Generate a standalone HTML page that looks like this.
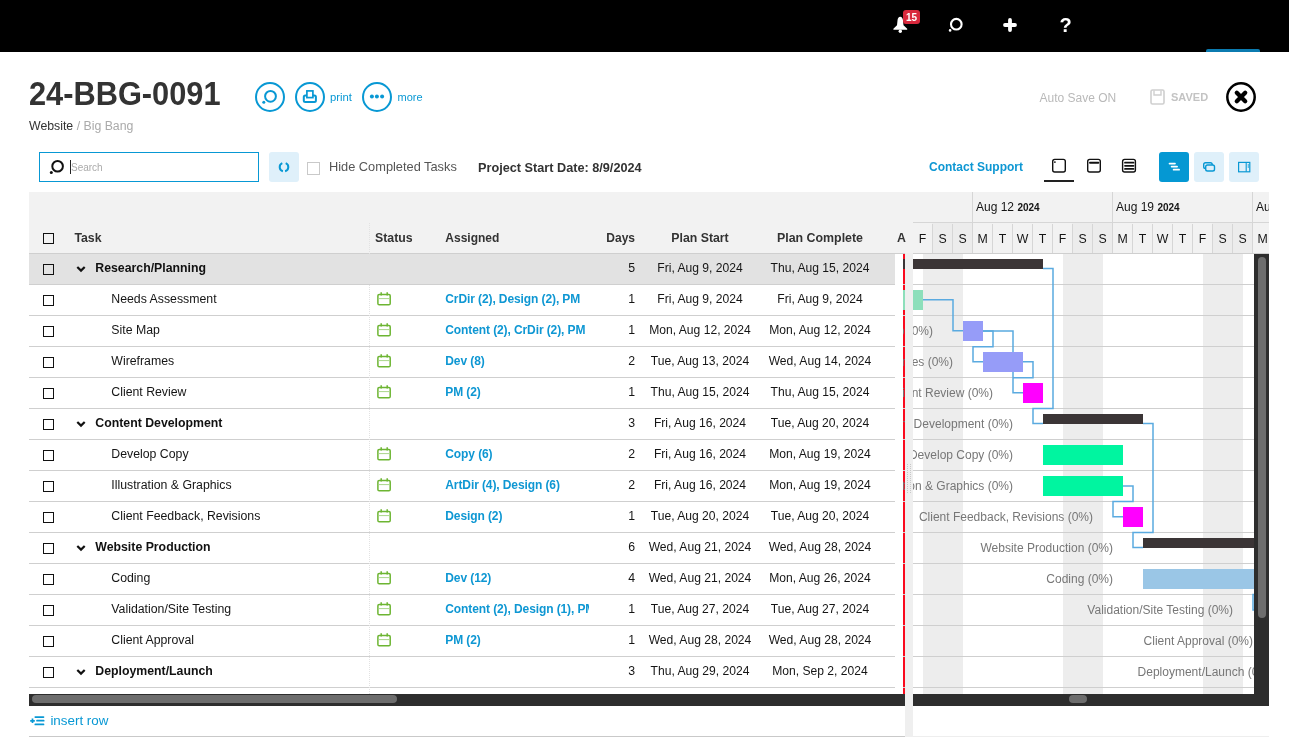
<!DOCTYPE html>
<html><head><meta charset="utf-8"><style>
html,body{margin:0;padding:0;background:#fff;}
body{width:1289px;height:737px;position:relative;overflow:hidden;font-family:"Liberation Sans", sans-serif;}
.wrap{position:absolute;left:0;top:0;width:1289px;height:737px;will-change:transform;}
.t{position:absolute;white-space:nowrap;}
</style></head><body><div class="wrap">
<div style="position:absolute;left:0px;top:0px;width:1289px;height:52px;background:#000"></div>
<div style="position:absolute;left:1206px;top:49px;width:54px;height:3px;background:#0b7bb0;border-radius:2px 2px 0 0"></div>
<svg style="position:absolute;left:892px;top:15px" width="18" height="20" viewBox="0 0 18 20"><path d="M8.2 1.8C6.4 2 5.7 3.4 5.5 5.5L5 10.3L1.4 13.8V14.8H15.2V13.8L11.5 10.3L11 5.5C10.8 3.4 10 2 8.2 1.8Z" fill="#fff"/><circle cx="8.3" cy="16.3" r="1.7" fill="#fff"/></svg>
<div style="position:absolute;left:903px;top:10px;width:17px;height:14px;background:#d8283c;border-radius:3px"></div>
<div class="t" style="left:903px;top:11px;width:17px;height:14px;text-align:center;font-size:10px;line-height:14px;color:#fff;font-weight:bold">15</div>
<svg style="position:absolute;left:946px;top:15px" width="20" height="20" viewBox="0 0 20 20"><circle cx="10.3" cy="9.2" r="5.3" fill="none" stroke="#fff" stroke-width="2.1"/><circle cx="4.1" cy="15.4" r="1.3" fill="#fff"/></svg>
<svg style="position:absolute;left:1002px;top:17px" width="16" height="16" viewBox="0 0 16 16"><path d="M8 3v10M3 8h10" stroke="#fff" stroke-width="3.8" stroke-linecap="round"/></svg>
<div class="t" style="left:1059.5px;top:11px;font-size:20px;line-height:28px;color:#fff;font-weight:bold;">?</div>
<div class="t" style="left:29px;top:69px;font-size:34px;line-height:48px;color:#333;font-weight:bold;transform:scaleX(0.905);transform-origin:0 0;">24-BBG-0091</div>
<div class="t" style="left:29px;top:117px;font-size:12.3px;line-height:18px;color:#333;font-weight:normal;">Website <span style="color:#aaa">/ Big Bang</span></div>
<svg style="position:absolute;left:254px;top:81px" width="32" height="32" viewBox="0 0 32 32"><circle cx="16" cy="16" r="14" fill="none" stroke="#0898d4" stroke-width="2"/></svg>
<svg style="position:absolute;left:294px;top:81px" width="32" height="32" viewBox="0 0 32 32"><circle cx="16" cy="16" r="14" fill="none" stroke="#0898d4" stroke-width="2"/></svg>
<svg style="position:absolute;left:361px;top:81px" width="32" height="32" viewBox="0 0 32 32"><circle cx="16" cy="16" r="14" fill="none" stroke="#0898d4" stroke-width="2"/></svg>
<svg style="position:absolute;left:254px;top:81px" width="32" height="32" viewBox="0 0 32 32"><circle cx="16.5" cy="15.3" r="5.4" fill="none" stroke="#0898d4" stroke-width="2"/><circle cx="9.8" cy="21.3" r="1.5" fill="#0898d4"/></svg>
<svg style="position:absolute;left:294px;top:81px" width="32" height="32" viewBox="0 0 32 32"><rect x="9.8" y="14.4" width="12.1" height="6.6" rx="1.5" fill="#fff" stroke="#0898d4" stroke-width="2"/><rect x="12.9" y="9.9" width="6" height="6.7" fill="#fff" stroke="#0898d4" stroke-width="1.7"/></svg>
<svg style="position:absolute;left:361px;top:81px" width="32" height="32" viewBox="0 0 32 32"><circle cx="10.9" cy="15.5" r="2" fill="#0898d4"/><circle cx="15.9" cy="15.5" r="2" fill="#0898d4"/><circle cx="21.1" cy="15.5" r="2" fill="#0898d4"/></svg>
<div class="t" style="left:330px;top:89px;font-size:11.3px;line-height:16px;color:#0898d4;font-weight:normal;">print</div>
<div class="t" style="left:397.5px;top:89px;font-size:11px;line-height:16px;color:#0898d4;font-weight:normal;">more</div>
<div class="t" style="left:1039.5px;top:90px;font-size:12px;line-height:17px;color:#b9b9b9;font-weight:normal;">Auto Save ON</div>
<svg style="position:absolute;left:1149px;top:88px" width="18" height="18" viewBox="0 0 18 18"><rect x="2" y="2" width="13" height="14" rx="1.5" fill="none" stroke="#cfcfcf" stroke-width="1.6"/><path d="M5 2.5v4.5h7V2.5" fill="none" stroke="#cfcfcf" stroke-width="1.4"/></svg>
<div class="t" style="left:1171px;top:89px;font-size:11px;line-height:16px;color:#c3c3c3;font-weight:bold;">SAVED</div>
<svg style="position:absolute;left:1225px;top:81px" width="32" height="32" viewBox="0 0 32 32"><circle cx="16" cy="16" r="13.7" fill="none" stroke="#000" stroke-width="2.5"/><path d="M11.8 11.8l8.4 8.4M20.2 11.8l-8.4 8.4" stroke="#000" stroke-width="4.3" stroke-linecap="round"/></svg>
<div style="position:absolute;left:39px;top:152px;width:218px;height:28px;border:1px solid #0898d4;background:#fff"></div>
<svg style="position:absolute;left:48px;top:158px" width="18" height="18" viewBox="0 0 18 18"><circle cx="9.6" cy="8.3" r="5.3" fill="none" stroke="#111" stroke-width="2"/><circle cx="3.3" cy="14.6" r="1.5" fill="#111"/></svg>
<div style="position:absolute;left:70px;top:160px;width:1px;height:14px;background:#222"></div>
<div class="t" style="left:71px;top:161px;font-size:10px;line-height:14px;color:#aaa;font-weight:normal;">Search</div>
<div style="position:absolute;left:269px;top:152px;width:30px;height:30px;background:#dff0fa;border-radius:3px"></div>
<svg style="position:absolute;left:276px;top:159px" width="16" height="16" viewBox="0 0 16 16"><path d="M6.3 4.05A4.3 4.3 0 0 0 6.9 12.16M9.7 4.05A4.3 4.3 0 0 1 9.1 12.16" fill="none" stroke="#0898d4" stroke-width="2"/></svg>
<div style="position:absolute;left:307px;top:162px;width:11px;height:11px;border:1px solid #c9c9c9;background:#fff"></div>
<div class="t" style="left:329px;top:158px;font-size:12.8px;line-height:18px;color:#555;font-weight:normal;">Hide Completed Tasks</div>
<div class="t" style="left:478px;top:159px;font-size:12.7px;line-height:18px;color:#333;font-weight:bold;">Project Start Date: 8/9/2024</div>
<div class="t" style="left:929px;top:159px;font-size:12px;line-height:17px;color:#0e97d3;font-weight:bold;">Contact Support</div>
<svg style="position:absolute;left:1050px;top:157px" width="18" height="18" viewBox="0 0 18 18"><rect x="2.7" y="2.4" width="12.6" height="12.6" rx="2" fill="none" stroke="#111" stroke-width="1.4"/><circle cx="4.9" cy="5.1" r="0.9" fill="#111"/></svg>
<div style="position:absolute;left:1044px;top:180px;width:30px;height:2px;background:#222"></div>
<svg style="position:absolute;left:1085px;top:157px" width="18" height="18" viewBox="0 0 18 18"><rect x="2.7" y="2.4" width="12.6" height="12.6" rx="2" fill="none" stroke="#111" stroke-width="1.4"/><path d="M5 5.7h8.3" stroke="#111" stroke-width="2" stroke-linecap="round"/></svg>
<svg style="position:absolute;left:1120px;top:157px" width="18" height="18" viewBox="0 0 18 18"><rect x="2.6" y="2.4" width="12.8" height="12.6" rx="2" fill="none" stroke="#111" stroke-width="1.4"/><path d="M5 5.7h8.5M5 8.8h8.5M5 11.9h8.5" stroke="#111" stroke-width="1.8" stroke-linecap="round"/></svg>
<div style="position:absolute;left:1159px;top:152px;width:30px;height:30px;background:#0598d3;border-radius:3px"></div>
<svg style="position:absolute;left:1159px;top:152px" width="30" height="30" viewBox="0 0 30 30"><path d="M10.5 11.6h5.5M12.6 14.6h5.5M14.6 17.7h5.5" stroke="#fff" stroke-width="1.7" stroke-linecap="round"/></svg>
<div style="position:absolute;left:1194px;top:152px;width:30px;height:30px;background:#dff0fa;border-radius:3px"></div>
<svg style="position:absolute;left:1194px;top:152px" width="30" height="30" viewBox="0 0 30 30"><rect x="9.7" y="10.7" width="8.5" height="5.8" rx="1.8" fill="none" stroke="#0898d4" stroke-width="1.4"/><rect x="11.7" y="13" width="8.8" height="6" rx="1.8" fill="#dff0fa" stroke="#0898d4" stroke-width="1.4"/></svg>
<div style="position:absolute;left:1229px;top:152px;width:30px;height:30px;background:#dff0fa;border-radius:3px"></div>
<svg style="position:absolute;left:1229px;top:152px" width="30" height="30" viewBox="0 0 30 30"><rect x="9.6" y="10.4" width="11.2" height="9.4" fill="none" stroke="#0898d4" stroke-width="1.2"/><path d="M17.2 10.4v9.4" stroke="#0898d4" stroke-width="1.1"/><circle cx="19.3" cy="13" r=".7" fill="#0898d4"/><circle cx="19.3" cy="15" r=".7" fill="#0898d4"/></svg>
<div style="position:absolute;left:29px;top:192px;width:1240px;height:61px;background:#f2f2f2"></div>
<div style="position:absolute;left:29px;top:253px;width:876px;height:1px;background:#cfcfcf"></div>
<div style="position:absolute;left:43px;top:233px;width:9px;height:9px;border:1.3px solid #111;background:transparent"></div>
<div class="t" style="left:74.4px;top:229px;font-size:12.3px;line-height:18px;color:#333;font-weight:bold;">Task</div>
<div class="t" style="left:375px;top:229px;font-size:12.3px;line-height:18px;color:#333;font-weight:bold;">Status</div>
<div class="t" style="left:445.3px;top:230px;font-size:12.0px;line-height:17px;color:#333;font-weight:bold;">Assigned</div>
<div class="t" style="right:654px;top:230px;font-size:12.0px;line-height:17px;color:#333;font-weight:bold;">Days</div>
<div class="t" style="left:400px;width:600px;text-align:center;top:229px;font-size:12.3px;line-height:18px;color:#333;font-weight:bold;">Plan Start</div>
<div class="t" style="left:520px;width:600px;text-align:center;top:229px;font-size:12.4px;line-height:18px;color:#333;font-weight:bold;">Plan Complete</div>
<div class="t" style="left:897px;top:229px;font-size:12.3px;line-height:18px;color:#333;font-weight:bold;">A</div>
<div style="position:absolute;left:29px;top:254px;width:866px;height:30px;background:#e2e2e2"></div>
<div style="position:absolute;left:29px;top:284px;width:866px;height:1px;background:#cfcfcf"></div>
<div style="position:absolute;left:43px;top:264px;width:9px;height:9px;border:1.3px solid #111;background:transparent"></div>
<svg style="position:absolute;left:75px;top:264px" width="12" height="10" viewBox="0 0 12 10"><path d="M2.3 3l3.7 3.6L9.7 3" fill="none" stroke="#111" stroke-width="2.2"/></svg>
<div class="t" style="left:95.3px;top:259px;font-size:12.3px;line-height:18px;color:#111;font-weight:bold;">Research/Planning</div>
<div class="t" style="right:654px;top:259px;font-size:12.3px;line-height:18px;color:#151515;font-weight:normal;">5</div>
<div class="t" style="left:400px;width:600px;text-align:center;top:260px;font-size:12.1px;line-height:17px;color:#151515;font-weight:normal;">Fri, Aug 9, 2024</div>
<div class="t" style="left:520px;width:600px;text-align:center;top:260px;font-size:12.1px;line-height:17px;color:#151515;font-weight:normal;">Thu, Aug 15, 2024</div>
<div style="position:absolute;left:29px;top:315px;width:866px;height:1px;background:#cfcfcf"></div>
<div style="position:absolute;left:43px;top:295px;width:9px;height:9px;border:1.3px solid #111;background:transparent"></div>
<div class="t" style="left:111.3px;top:290px;font-size:12.3px;line-height:18px;color:#151515;font-weight:normal;">Needs Assessment</div>
<svg style="position:absolute;left:376px;top:291px" width="16" height="16" viewBox="0 0 16 16"><rect x="1.9" y="3.5" width="12.3" height="10.3" rx="1.3" fill="none" stroke="#6db532" stroke-width="1.5"/><path d="M5.2 1.2v3.3M11.2 1.2v3.3" stroke="#6db532" stroke-width="1.5"/><path d="M2.5 7.6h11" stroke="#a9d68a" stroke-width="1"/></svg>
<div class="t" style="left:445.3px;top:291px;width:144px;overflow:hidden;font-size:12px;letter-spacing:-0.1px;line-height:17px;color:#0e97d3;font-weight:bold">CrDir (2), Design (2), PM</div>
<div class="t" style="right:654px;top:290px;font-size:12.3px;line-height:18px;color:#151515;font-weight:normal;">1</div>
<div class="t" style="left:400px;width:600px;text-align:center;top:291px;font-size:12.1px;line-height:17px;color:#151515;font-weight:normal;">Fri, Aug 9, 2024</div>
<div class="t" style="left:520px;width:600px;text-align:center;top:291px;font-size:12.1px;line-height:17px;color:#151515;font-weight:normal;">Fri, Aug 9, 2024</div>
<div style="position:absolute;left:29px;top:346px;width:866px;height:1px;background:#cfcfcf"></div>
<div style="position:absolute;left:43px;top:326px;width:9px;height:9px;border:1.3px solid #111;background:transparent"></div>
<div class="t" style="left:111.3px;top:321px;font-size:12.3px;line-height:18px;color:#151515;font-weight:normal;">Site Map</div>
<svg style="position:absolute;left:376px;top:322px" width="16" height="16" viewBox="0 0 16 16"><rect x="1.9" y="3.5" width="12.3" height="10.3" rx="1.3" fill="none" stroke="#6db532" stroke-width="1.5"/><path d="M5.2 1.2v3.3M11.2 1.2v3.3" stroke="#6db532" stroke-width="1.5"/><path d="M2.5 7.6h11" stroke="#a9d68a" stroke-width="1"/></svg>
<div class="t" style="left:445.3px;top:322px;width:144px;overflow:hidden;font-size:12px;letter-spacing:-0.1px;line-height:17px;color:#0e97d3;font-weight:bold">Content (2), CrDir (2), PM</div>
<div class="t" style="right:654px;top:321px;font-size:12.3px;line-height:18px;color:#151515;font-weight:normal;">1</div>
<div class="t" style="left:400px;width:600px;text-align:center;top:322px;font-size:12.1px;line-height:17px;color:#151515;font-weight:normal;">Mon, Aug 12, 2024</div>
<div class="t" style="left:520px;width:600px;text-align:center;top:322px;font-size:12.1px;line-height:17px;color:#151515;font-weight:normal;">Mon, Aug 12, 2024</div>
<div style="position:absolute;left:29px;top:377px;width:866px;height:1px;background:#cfcfcf"></div>
<div style="position:absolute;left:43px;top:357px;width:9px;height:9px;border:1.3px solid #111;background:transparent"></div>
<div class="t" style="left:111.3px;top:352px;font-size:12.3px;line-height:18px;color:#151515;font-weight:normal;">Wireframes</div>
<svg style="position:absolute;left:376px;top:353px" width="16" height="16" viewBox="0 0 16 16"><rect x="1.9" y="3.5" width="12.3" height="10.3" rx="1.3" fill="none" stroke="#6db532" stroke-width="1.5"/><path d="M5.2 1.2v3.3M11.2 1.2v3.3" stroke="#6db532" stroke-width="1.5"/><path d="M2.5 7.6h11" stroke="#a9d68a" stroke-width="1"/></svg>
<div class="t" style="left:445.3px;top:353px;width:144px;overflow:hidden;font-size:12px;letter-spacing:-0.1px;line-height:17px;color:#0e97d3;font-weight:bold">Dev (8)</div>
<div class="t" style="right:654px;top:352px;font-size:12.3px;line-height:18px;color:#151515;font-weight:normal;">2</div>
<div class="t" style="left:400px;width:600px;text-align:center;top:353px;font-size:12.1px;line-height:17px;color:#151515;font-weight:normal;">Tue, Aug 13, 2024</div>
<div class="t" style="left:520px;width:600px;text-align:center;top:353px;font-size:12.1px;line-height:17px;color:#151515;font-weight:normal;">Wed, Aug 14, 2024</div>
<div style="position:absolute;left:29px;top:408px;width:866px;height:1px;background:#cfcfcf"></div>
<div style="position:absolute;left:43px;top:388px;width:9px;height:9px;border:1.3px solid #111;background:transparent"></div>
<div class="t" style="left:111.3px;top:383px;font-size:12.3px;line-height:18px;color:#151515;font-weight:normal;">Client Review</div>
<svg style="position:absolute;left:376px;top:384px" width="16" height="16" viewBox="0 0 16 16"><rect x="1.9" y="3.5" width="12.3" height="10.3" rx="1.3" fill="none" stroke="#6db532" stroke-width="1.5"/><path d="M5.2 1.2v3.3M11.2 1.2v3.3" stroke="#6db532" stroke-width="1.5"/><path d="M2.5 7.6h11" stroke="#a9d68a" stroke-width="1"/></svg>
<div class="t" style="left:445.3px;top:384px;width:144px;overflow:hidden;font-size:12px;letter-spacing:-0.1px;line-height:17px;color:#0e97d3;font-weight:bold">PM (2)</div>
<div class="t" style="right:654px;top:383px;font-size:12.3px;line-height:18px;color:#151515;font-weight:normal;">1</div>
<div class="t" style="left:400px;width:600px;text-align:center;top:384px;font-size:12.1px;line-height:17px;color:#151515;font-weight:normal;">Thu, Aug 15, 2024</div>
<div class="t" style="left:520px;width:600px;text-align:center;top:384px;font-size:12.1px;line-height:17px;color:#151515;font-weight:normal;">Thu, Aug 15, 2024</div>
<div style="position:absolute;left:29px;top:439px;width:866px;height:1px;background:#cfcfcf"></div>
<div style="position:absolute;left:43px;top:419px;width:9px;height:9px;border:1.3px solid #111;background:transparent"></div>
<svg style="position:absolute;left:75px;top:419px" width="12" height="10" viewBox="0 0 12 10"><path d="M2.3 3l3.7 3.6L9.7 3" fill="none" stroke="#111" stroke-width="2.2"/></svg>
<div class="t" style="left:95.3px;top:414px;font-size:12.3px;line-height:18px;color:#111;font-weight:bold;">Content Development</div>
<div class="t" style="right:654px;top:414px;font-size:12.3px;line-height:18px;color:#151515;font-weight:normal;">3</div>
<div class="t" style="left:400px;width:600px;text-align:center;top:415px;font-size:12.1px;line-height:17px;color:#151515;font-weight:normal;">Fri, Aug 16, 2024</div>
<div class="t" style="left:520px;width:600px;text-align:center;top:415px;font-size:12.1px;line-height:17px;color:#151515;font-weight:normal;">Tue, Aug 20, 2024</div>
<div style="position:absolute;left:29px;top:470px;width:866px;height:1px;background:#cfcfcf"></div>
<div style="position:absolute;left:43px;top:450px;width:9px;height:9px;border:1.3px solid #111;background:transparent"></div>
<div class="t" style="left:111.3px;top:445px;font-size:12.3px;line-height:18px;color:#151515;font-weight:normal;">Develop Copy</div>
<svg style="position:absolute;left:376px;top:446px" width="16" height="16" viewBox="0 0 16 16"><rect x="1.9" y="3.5" width="12.3" height="10.3" rx="1.3" fill="none" stroke="#6db532" stroke-width="1.5"/><path d="M5.2 1.2v3.3M11.2 1.2v3.3" stroke="#6db532" stroke-width="1.5"/><path d="M2.5 7.6h11" stroke="#a9d68a" stroke-width="1"/></svg>
<div class="t" style="left:445.3px;top:446px;width:144px;overflow:hidden;font-size:12px;letter-spacing:-0.1px;line-height:17px;color:#0e97d3;font-weight:bold">Copy (6)</div>
<div class="t" style="right:654px;top:445px;font-size:12.3px;line-height:18px;color:#151515;font-weight:normal;">2</div>
<div class="t" style="left:400px;width:600px;text-align:center;top:446px;font-size:12.1px;line-height:17px;color:#151515;font-weight:normal;">Fri, Aug 16, 2024</div>
<div class="t" style="left:520px;width:600px;text-align:center;top:446px;font-size:12.1px;line-height:17px;color:#151515;font-weight:normal;">Mon, Aug 19, 2024</div>
<div style="position:absolute;left:29px;top:501px;width:866px;height:1px;background:#cfcfcf"></div>
<div style="position:absolute;left:43px;top:481px;width:9px;height:9px;border:1.3px solid #111;background:transparent"></div>
<div class="t" style="left:111.3px;top:476px;font-size:12.3px;line-height:18px;color:#151515;font-weight:normal;">Illustration &amp; Graphics</div>
<svg style="position:absolute;left:376px;top:477px" width="16" height="16" viewBox="0 0 16 16"><rect x="1.9" y="3.5" width="12.3" height="10.3" rx="1.3" fill="none" stroke="#6db532" stroke-width="1.5"/><path d="M5.2 1.2v3.3M11.2 1.2v3.3" stroke="#6db532" stroke-width="1.5"/><path d="M2.5 7.6h11" stroke="#a9d68a" stroke-width="1"/></svg>
<div class="t" style="left:445.3px;top:477px;width:144px;overflow:hidden;font-size:12px;letter-spacing:-0.1px;line-height:17px;color:#0e97d3;font-weight:bold">ArtDir (4), Design (6)</div>
<div class="t" style="right:654px;top:476px;font-size:12.3px;line-height:18px;color:#151515;font-weight:normal;">2</div>
<div class="t" style="left:400px;width:600px;text-align:center;top:477px;font-size:12.1px;line-height:17px;color:#151515;font-weight:normal;">Fri, Aug 16, 2024</div>
<div class="t" style="left:520px;width:600px;text-align:center;top:477px;font-size:12.1px;line-height:17px;color:#151515;font-weight:normal;">Mon, Aug 19, 2024</div>
<div style="position:absolute;left:29px;top:532px;width:866px;height:1px;background:#cfcfcf"></div>
<div style="position:absolute;left:43px;top:512px;width:9px;height:9px;border:1.3px solid #111;background:transparent"></div>
<div class="t" style="left:111.3px;top:507px;font-size:12.3px;line-height:18px;color:#151515;font-weight:normal;">Client Feedback, Revisions</div>
<svg style="position:absolute;left:376px;top:508px" width="16" height="16" viewBox="0 0 16 16"><rect x="1.9" y="3.5" width="12.3" height="10.3" rx="1.3" fill="none" stroke="#6db532" stroke-width="1.5"/><path d="M5.2 1.2v3.3M11.2 1.2v3.3" stroke="#6db532" stroke-width="1.5"/><path d="M2.5 7.6h11" stroke="#a9d68a" stroke-width="1"/></svg>
<div class="t" style="left:445.3px;top:508px;width:144px;overflow:hidden;font-size:12px;letter-spacing:-0.1px;line-height:17px;color:#0e97d3;font-weight:bold">Design (2)</div>
<div class="t" style="right:654px;top:507px;font-size:12.3px;line-height:18px;color:#151515;font-weight:normal;">1</div>
<div class="t" style="left:400px;width:600px;text-align:center;top:508px;font-size:12.1px;line-height:17px;color:#151515;font-weight:normal;">Tue, Aug 20, 2024</div>
<div class="t" style="left:520px;width:600px;text-align:center;top:508px;font-size:12.1px;line-height:17px;color:#151515;font-weight:normal;">Tue, Aug 20, 2024</div>
<div style="position:absolute;left:29px;top:563px;width:866px;height:1px;background:#cfcfcf"></div>
<div style="position:absolute;left:43px;top:543px;width:9px;height:9px;border:1.3px solid #111;background:transparent"></div>
<svg style="position:absolute;left:75px;top:543px" width="12" height="10" viewBox="0 0 12 10"><path d="M2.3 3l3.7 3.6L9.7 3" fill="none" stroke="#111" stroke-width="2.2"/></svg>
<div class="t" style="left:95.3px;top:538px;font-size:12.3px;line-height:18px;color:#111;font-weight:bold;">Website Production</div>
<div class="t" style="right:654px;top:538px;font-size:12.3px;line-height:18px;color:#151515;font-weight:normal;">6</div>
<div class="t" style="left:400px;width:600px;text-align:center;top:539px;font-size:12.1px;line-height:17px;color:#151515;font-weight:normal;">Wed, Aug 21, 2024</div>
<div class="t" style="left:520px;width:600px;text-align:center;top:539px;font-size:12.1px;line-height:17px;color:#151515;font-weight:normal;">Wed, Aug 28, 2024</div>
<div style="position:absolute;left:29px;top:594px;width:866px;height:1px;background:#cfcfcf"></div>
<div style="position:absolute;left:43px;top:574px;width:9px;height:9px;border:1.3px solid #111;background:transparent"></div>
<div class="t" style="left:111.3px;top:569px;font-size:12.3px;line-height:18px;color:#151515;font-weight:normal;">Coding</div>
<svg style="position:absolute;left:376px;top:570px" width="16" height="16" viewBox="0 0 16 16"><rect x="1.9" y="3.5" width="12.3" height="10.3" rx="1.3" fill="none" stroke="#6db532" stroke-width="1.5"/><path d="M5.2 1.2v3.3M11.2 1.2v3.3" stroke="#6db532" stroke-width="1.5"/><path d="M2.5 7.6h11" stroke="#a9d68a" stroke-width="1"/></svg>
<div class="t" style="left:445.3px;top:570px;width:144px;overflow:hidden;font-size:12px;letter-spacing:-0.1px;line-height:17px;color:#0e97d3;font-weight:bold">Dev (12)</div>
<div class="t" style="right:654px;top:569px;font-size:12.3px;line-height:18px;color:#151515;font-weight:normal;">4</div>
<div class="t" style="left:400px;width:600px;text-align:center;top:570px;font-size:12.1px;line-height:17px;color:#151515;font-weight:normal;">Wed, Aug 21, 2024</div>
<div class="t" style="left:520px;width:600px;text-align:center;top:570px;font-size:12.1px;line-height:17px;color:#151515;font-weight:normal;">Mon, Aug 26, 2024</div>
<div style="position:absolute;left:29px;top:625px;width:866px;height:1px;background:#cfcfcf"></div>
<div style="position:absolute;left:43px;top:605px;width:9px;height:9px;border:1.3px solid #111;background:transparent"></div>
<div class="t" style="left:111.3px;top:600px;font-size:12.3px;line-height:18px;color:#151515;font-weight:normal;">Validation/Site Testing</div>
<svg style="position:absolute;left:376px;top:601px" width="16" height="16" viewBox="0 0 16 16"><rect x="1.9" y="3.5" width="12.3" height="10.3" rx="1.3" fill="none" stroke="#6db532" stroke-width="1.5"/><path d="M5.2 1.2v3.3M11.2 1.2v3.3" stroke="#6db532" stroke-width="1.5"/><path d="M2.5 7.6h11" stroke="#a9d68a" stroke-width="1"/></svg>
<div class="t" style="left:445.3px;top:601px;width:144px;overflow:hidden;font-size:12px;letter-spacing:-0.1px;line-height:17px;color:#0e97d3;font-weight:bold">Content (2), Design (1), PM (2)</div>
<div class="t" style="right:654px;top:600px;font-size:12.3px;line-height:18px;color:#151515;font-weight:normal;">1</div>
<div class="t" style="left:400px;width:600px;text-align:center;top:601px;font-size:12.1px;line-height:17px;color:#151515;font-weight:normal;">Tue, Aug 27, 2024</div>
<div class="t" style="left:520px;width:600px;text-align:center;top:601px;font-size:12.1px;line-height:17px;color:#151515;font-weight:normal;">Tue, Aug 27, 2024</div>
<div style="position:absolute;left:29px;top:656px;width:866px;height:1px;background:#cfcfcf"></div>
<div style="position:absolute;left:43px;top:636px;width:9px;height:9px;border:1.3px solid #111;background:transparent"></div>
<div class="t" style="left:111.3px;top:631px;font-size:12.3px;line-height:18px;color:#151515;font-weight:normal;">Client Approval</div>
<svg style="position:absolute;left:376px;top:632px" width="16" height="16" viewBox="0 0 16 16"><rect x="1.9" y="3.5" width="12.3" height="10.3" rx="1.3" fill="none" stroke="#6db532" stroke-width="1.5"/><path d="M5.2 1.2v3.3M11.2 1.2v3.3" stroke="#6db532" stroke-width="1.5"/><path d="M2.5 7.6h11" stroke="#a9d68a" stroke-width="1"/></svg>
<div class="t" style="left:445.3px;top:632px;width:144px;overflow:hidden;font-size:12px;letter-spacing:-0.1px;line-height:17px;color:#0e97d3;font-weight:bold">PM (2)</div>
<div class="t" style="right:654px;top:631px;font-size:12.3px;line-height:18px;color:#151515;font-weight:normal;">1</div>
<div class="t" style="left:400px;width:600px;text-align:center;top:632px;font-size:12.1px;line-height:17px;color:#151515;font-weight:normal;">Wed, Aug 28, 2024</div>
<div class="t" style="left:520px;width:600px;text-align:center;top:632px;font-size:12.1px;line-height:17px;color:#151515;font-weight:normal;">Wed, Aug 28, 2024</div>
<div style="position:absolute;left:29px;top:687px;width:866px;height:1px;background:#cfcfcf"></div>
<div style="position:absolute;left:43px;top:667px;width:9px;height:9px;border:1.3px solid #111;background:transparent"></div>
<svg style="position:absolute;left:75px;top:667px" width="12" height="10" viewBox="0 0 12 10"><path d="M2.3 3l3.7 3.6L9.7 3" fill="none" stroke="#111" stroke-width="2.2"/></svg>
<div class="t" style="left:95.3px;top:662px;font-size:12.3px;line-height:18px;color:#111;font-weight:bold;">Deployment/Launch</div>
<div class="t" style="right:654px;top:662px;font-size:12.3px;line-height:18px;color:#151515;font-weight:normal;">3</div>
<div class="t" style="left:400px;width:600px;text-align:center;top:663px;font-size:12.1px;line-height:17px;color:#151515;font-weight:normal;">Thu, Aug 29, 2024</div>
<div class="t" style="left:520px;width:600px;text-align:center;top:663px;font-size:12.1px;line-height:17px;color:#151515;font-weight:normal;">Mon, Sep 2, 2024</div>
<div style="position:absolute;left:369px;top:223px;width:0;height:471px;border-left:1px dotted #e2e2e2"></div>
<div style="position:absolute;left:932px;top:223px;width:40px;height:30px;background:#ececec"></div>
<div style="position:absolute;left:1072px;top:223px;width:40px;height:30px;background:#ececec"></div>
<div style="position:absolute;left:1212px;top:223px;width:40px;height:30px;background:#ececec"></div>
<div style="position:absolute;left:972px;top:192px;width:1px;height:61px;background:#d6d6d6"></div>
<div style="position:absolute;left:1112px;top:192px;width:1px;height:61px;background:#d6d6d6"></div>
<div style="position:absolute;left:1252px;top:192px;width:1px;height:61px;background:#d6d6d6"></div>
<div style="position:absolute;left:932px;top:224px;width:1px;height:29px;background:#d6d6d6"></div>
<div style="position:absolute;left:952px;top:224px;width:1px;height:29px;background:#d6d6d6"></div>
<div style="position:absolute;left:992px;top:224px;width:1px;height:29px;background:#d6d6d6"></div>
<div style="position:absolute;left:1012px;top:224px;width:1px;height:29px;background:#d6d6d6"></div>
<div style="position:absolute;left:1032px;top:224px;width:1px;height:29px;background:#d6d6d6"></div>
<div style="position:absolute;left:1052px;top:224px;width:1px;height:29px;background:#d6d6d6"></div>
<div style="position:absolute;left:1072px;top:224px;width:1px;height:29px;background:#d6d6d6"></div>
<div style="position:absolute;left:1092px;top:224px;width:1px;height:29px;background:#d6d6d6"></div>
<div style="position:absolute;left:1132px;top:224px;width:1px;height:29px;background:#d6d6d6"></div>
<div style="position:absolute;left:1152px;top:224px;width:1px;height:29px;background:#d6d6d6"></div>
<div style="position:absolute;left:1172px;top:224px;width:1px;height:29px;background:#d6d6d6"></div>
<div style="position:absolute;left:1192px;top:224px;width:1px;height:29px;background:#d6d6d6"></div>
<div style="position:absolute;left:1212px;top:224px;width:1px;height:29px;background:#d6d6d6"></div>
<div style="position:absolute;left:1232px;top:224px;width:1px;height:29px;background:#d6d6d6"></div>
<div style="position:absolute;left:913px;top:222px;width:356px;height:1px;background:#d6d6d6"></div>
<div style="position:absolute;left:913px;top:253px;width:356px;height:1px;background:#cfcfcf"></div>
<div class="t" style="left:976px;top:199px;font-size:12px;line-height:17px;color:#151515;font-weight:normal;">Aug 12 <b style="font-size:10px">2024</b></div>
<div class="t" style="left:1116px;top:199px;font-size:12px;line-height:17px;color:#151515;font-weight:normal;">Aug 19 <b style="font-size:10px">2024</b></div>
<div style="position:absolute;left:1253px;top:192px;width:16px;height:30px;overflow:hidden"><div class="t" style="left:3px;top:7px;font-size:12px;line-height:17px;color:#151515">Aug 26</div></div>
<div class="t" style="left:622.5px;width:600px;text-align:center;top:230px;font-size:12.3px;line-height:18px;color:#151515;font-weight:normal;">F</div>
<div class="t" style="left:642.5px;width:600px;text-align:center;top:230px;font-size:12.3px;line-height:18px;color:#151515;font-weight:normal;">S</div>
<div class="t" style="left:662.5px;width:600px;text-align:center;top:230px;font-size:12.3px;line-height:18px;color:#151515;font-weight:normal;">S</div>
<div class="t" style="left:682.5px;width:600px;text-align:center;top:230px;font-size:12.3px;line-height:18px;color:#151515;font-weight:normal;">M</div>
<div class="t" style="left:702.5px;width:600px;text-align:center;top:230px;font-size:12.3px;line-height:18px;color:#151515;font-weight:normal;">T</div>
<div class="t" style="left:722.5px;width:600px;text-align:center;top:230px;font-size:12.3px;line-height:18px;color:#151515;font-weight:normal;">W</div>
<div class="t" style="left:742.5px;width:600px;text-align:center;top:230px;font-size:12.3px;line-height:18px;color:#151515;font-weight:normal;">T</div>
<div class="t" style="left:762.5px;width:600px;text-align:center;top:230px;font-size:12.3px;line-height:18px;color:#151515;font-weight:normal;">F</div>
<div class="t" style="left:782.5px;width:600px;text-align:center;top:230px;font-size:12.3px;line-height:18px;color:#151515;font-weight:normal;">S</div>
<div class="t" style="left:802.5px;width:600px;text-align:center;top:230px;font-size:12.3px;line-height:18px;color:#151515;font-weight:normal;">S</div>
<div class="t" style="left:822.5px;width:600px;text-align:center;top:230px;font-size:12.3px;line-height:18px;color:#151515;font-weight:normal;">M</div>
<div class="t" style="left:842.5px;width:600px;text-align:center;top:230px;font-size:12.3px;line-height:18px;color:#151515;font-weight:normal;">T</div>
<div class="t" style="left:862.5px;width:600px;text-align:center;top:230px;font-size:12.3px;line-height:18px;color:#151515;font-weight:normal;">W</div>
<div class="t" style="left:882.5px;width:600px;text-align:center;top:230px;font-size:12.3px;line-height:18px;color:#151515;font-weight:normal;">T</div>
<div class="t" style="left:902.5px;width:600px;text-align:center;top:230px;font-size:12.3px;line-height:18px;color:#151515;font-weight:normal;">F</div>
<div class="t" style="left:922.5px;width:600px;text-align:center;top:230px;font-size:12.3px;line-height:18px;color:#151515;font-weight:normal;">S</div>
<div class="t" style="left:942.5px;width:600px;text-align:center;top:230px;font-size:12.3px;line-height:18px;color:#151515;font-weight:normal;">S</div>
<div class="t" style="left:962.5px;width:600px;text-align:center;top:230px;font-size:12.3px;line-height:18px;color:#151515;font-weight:normal;">M</div>
<div style="position:absolute;left:1269px;top:192px;width:20px;height:70px;background:#fff"></div>
<div style="position:absolute;left:903px;top:254px;width:351px;height:440px;overflow:hidden">
<div style="position:absolute;left:20px;top:0px;width:40px;height:440px;background:#ededed"></div>
<div style="position:absolute;left:160px;top:0px;width:40px;height:440px;background:#ededed"></div>
<div style="position:absolute;left:300px;top:0px;width:40px;height:440px;background:#ededed"></div>
<div style="position:absolute;left:0px;top:0px;width:2px;height:440px;background:#fa0a1e"></div>
<div style="position:absolute;left:0px;top:30px;width:351px;height:1px;background:#cfcfcf"></div>
<div style="position:absolute;left:0px;top:61px;width:351px;height:1px;background:#cfcfcf"></div>
<div style="position:absolute;left:0px;top:92px;width:351px;height:1px;background:#cfcfcf"></div>
<div style="position:absolute;left:0px;top:123px;width:351px;height:1px;background:#cfcfcf"></div>
<div style="position:absolute;left:0px;top:154px;width:351px;height:1px;background:#cfcfcf"></div>
<div style="position:absolute;left:0px;top:185px;width:351px;height:1px;background:#cfcfcf"></div>
<div style="position:absolute;left:0px;top:216px;width:351px;height:1px;background:#cfcfcf"></div>
<div style="position:absolute;left:0px;top:247px;width:351px;height:1px;background:#cfcfcf"></div>
<div style="position:absolute;left:0px;top:278px;width:351px;height:1px;background:#cfcfcf"></div>
<div style="position:absolute;left:0px;top:309px;width:351px;height:1px;background:#cfcfcf"></div>
<div style="position:absolute;left:0px;top:340px;width:351px;height:1px;background:#cfcfcf"></div>
<div style="position:absolute;left:0px;top:371px;width:351px;height:1px;background:#cfcfcf"></div>
<div style="position:absolute;left:0px;top:402px;width:351px;height:1px;background:#cfcfcf"></div>
<div style="position:absolute;left:0px;top:433px;width:351px;height:1px;background:#cfcfcf"></div>
<div class="t" style="right:371px;top:7px;font-size:12px;line-height:17px;color:#777">Research/Planning (0%)</div>
<div class="t" style="right:381px;top:38px;font-size:12px;line-height:17px;color:#777">Needs Assessment (0%)</div>
<div class="t" style="right:321px;top:69px;font-size:12px;line-height:17px;color:#777">Site Map (0%)</div>
<div class="t" style="right:301px;top:100px;font-size:12px;line-height:17px;color:#777">Wireframes (0%)</div>
<div class="t" style="right:261px;top:131px;font-size:12px;line-height:17px;color:#777">Client Review (0%)</div>
<div class="t" style="right:241px;top:162px;font-size:12px;line-height:17px;color:#777">Content Development (0%)</div>
<div class="t" style="right:241px;top:193px;font-size:12px;line-height:17px;color:#777">Develop Copy (0%)</div>
<div class="t" style="right:241px;top:224px;font-size:12px;line-height:17px;color:#777">Illustration &amp; Graphics (0%)</div>
<div class="t" style="right:161px;top:255px;font-size:12px;line-height:17px;color:#777">Client Feedback, Revisions (0%)</div>
<div class="t" style="right:141px;top:286px;font-size:12px;line-height:17px;color:#777">Website Production (0%)</div>
<div class="t" style="right:141px;top:317px;font-size:12px;line-height:17px;color:#777">Coding (0%)</div>
<div class="t" style="right:21px;top:348px;font-size:12px;line-height:17px;color:#777">Validation/Site Testing (0%)</div>
<div class="t" style="right:1px;top:379px;font-size:12px;line-height:17px;color:#777">Client Approval (0%)</div>
<div class="t" style="right:-19px;top:410px;font-size:12px;line-height:17px;color:#777">Deployment/Launch (0%)</div>
<svg style="position:absolute;left:0;top:0" width="351" height="440" viewBox="903 254 351 440"><path d="M1043 268.5H1053V408.5H1033V423.5H1043" fill="none" stroke="#5aaae0" stroke-width="1.5"/><path d="M923 299.8H953V330.8H963" fill="none" stroke="#5aaae0" stroke-width="1.5"/><path d="M983 331H993V346.8H973V361.8H983" fill="none" stroke="#5aaae0" stroke-width="1.5"/><path d="M983 331H1013V392.8H1023" fill="none" stroke="#5aaae0" stroke-width="1.5"/><path d="M1023 361.8H1033V377.8H1013" fill="none" stroke="#5aaae0" stroke-width="1.5"/><path d="M1123 486H1133V501.6H1113V516.8H1123" fill="none" stroke="#5aaae0" stroke-width="1.5"/><path d="M1143 423.5H1153V532.4H1133V547.6H1143" fill="none" stroke="#5aaae0" stroke-width="1.5"/><path d="M1263 579H1273V594.5H1253V610H1263" fill="none" stroke="#5aaae0" stroke-width="1.5"/></svg>
<div style="position:absolute;left:0px;top:5px;width:140px;height:10px;background:#3b3536"></div>
<div style="position:absolute;left:0px;top:36px;width:20px;height:20px;background:#8ddfbb"></div>
<div style="position:absolute;left:60px;top:67px;width:20px;height:20px;background:#969cf8"></div>
<div style="position:absolute;left:80px;top:98px;width:40px;height:20px;background:#969cf8"></div>
<div style="position:absolute;left:120px;top:129px;width:20px;height:20px;background:#ff00ff"></div>
<div style="position:absolute;left:140px;top:160px;width:100px;height:10px;background:#3b3536"></div>
<div style="position:absolute;left:140px;top:191px;width:80px;height:20px;background:#00f5a0"></div>
<div style="position:absolute;left:140px;top:222px;width:80px;height:20px;background:#00f5a0"></div>
<div style="position:absolute;left:220px;top:253px;width:20px;height:20px;background:#ff00ff"></div>
<div style="position:absolute;left:240px;top:284px;width:200px;height:10px;background:#3b3536"></div>
<div style="position:absolute;left:240px;top:315px;width:120px;height:20px;background:#9ac6e6"></div>
<div style="position:absolute;left:360px;top:346px;width:20px;height:20px;background:#9ac6e6"></div>
<div style="position:absolute;left:380px;top:377px;width:20px;height:20px;background:#ff00ff"></div>
<div style="position:absolute;left:400px;top:408px;width:100px;height:10px;background:#3b3536"></div>
</div>
<div style="position:absolute;left:905px;top:253px;width:8px;height:484px;background:#efefef"></div>
<svg style="position:absolute;left:906px;top:463px" width="7" height="32" viewBox="0 0 7 32"><rect x="1" y="1" width="1" height="1" fill="#c8c8c8"/><rect x="1" y="3" width="1" height="1" fill="#c8c8c8"/><rect x="1" y="5" width="1" height="1" fill="#c8c8c8"/><rect x="1" y="7" width="1" height="1" fill="#c8c8c8"/><rect x="1" y="9" width="1" height="1" fill="#c8c8c8"/><rect x="1" y="11" width="1" height="1" fill="#c8c8c8"/><rect x="1" y="13" width="1" height="1" fill="#c8c8c8"/><rect x="1" y="15" width="1" height="1" fill="#c8c8c8"/><rect x="1" y="17" width="1" height="1" fill="#c8c8c8"/><rect x="1" y="19" width="1" height="1" fill="#c8c8c8"/><rect x="1" y="21" width="1" height="1" fill="#c8c8c8"/><rect x="1" y="23" width="1" height="1" fill="#c8c8c8"/><rect x="1" y="25" width="1" height="1" fill="#c8c8c8"/><rect x="1" y="27" width="1" height="1" fill="#c8c8c8"/><rect x="1" y="29" width="1" height="1" fill="#c8c8c8"/><rect x="4" y="1" width="1" height="1" fill="#c8c8c8"/><rect x="4" y="3" width="1" height="1" fill="#c8c8c8"/><rect x="4" y="5" width="1" height="1" fill="#c8c8c8"/><rect x="4" y="7" width="1" height="1" fill="#c8c8c8"/><rect x="4" y="9" width="1" height="1" fill="#c8c8c8"/><rect x="4" y="11" width="1" height="1" fill="#c8c8c8"/><rect x="4" y="13" width="1" height="1" fill="#c8c8c8"/><rect x="4" y="15" width="1" height="1" fill="#c8c8c8"/><rect x="4" y="17" width="1" height="1" fill="#c8c8c8"/><rect x="4" y="19" width="1" height="1" fill="#c8c8c8"/><rect x="4" y="21" width="1" height="1" fill="#c8c8c8"/><rect x="4" y="23" width="1" height="1" fill="#c8c8c8"/><rect x="4" y="25" width="1" height="1" fill="#c8c8c8"/><rect x="4" y="27" width="1" height="1" fill="#c8c8c8"/><rect x="4" y="29" width="1" height="1" fill="#c8c8c8"/></svg>
<div style="position:absolute;left:1254px;top:254px;width:15px;height:440px;background:#2d2d2d"></div>
<div style="position:absolute;left:1258px;top:257px;width:8px;height:361px;background:#6d6d6d;border-radius:4px"></div>
<div style="position:absolute;left:913px;top:694px;width:356px;height:12px;background:#2d2d2d"></div>
<div style="position:absolute;left:1069px;top:695px;width:18px;height:8px;background:#6d6d6d;border-radius:4px"></div>
<div style="position:absolute;left:29px;top:694px;width:876px;height:12px;background:#2d2d2d"></div>
<div style="position:absolute;left:32px;top:695px;width:365px;height:8px;background:#6d6d6d;border-radius:4px"></div>
<svg style="position:absolute;left:29px;top:714px" width="16" height="13" viewBox="0 0 16 13"><path d="M6.3 3.1h8.2M8 6.7h6.7M6.3 10.4h8.2" stroke="#0898d4" stroke-width="1.7" stroke-linecap="round"/><path d="M1.2 6.8h4.6M3.5 4.5v4.6" stroke="#0898d4" stroke-width="1.7"/></svg>
<div class="t" style="left:50.4px;top:711px;font-size:13.4px;line-height:19px;color:#0898d4;font-weight:normal;">insert row</div>
<div style="position:absolute;left:29px;top:736px;width:876px;height:1px;background:#c9c9c9"></div>
<div style="position:absolute;left:913px;top:736px;width:356px;height:1px;background:#eeeeee"></div>
</div></body></html>
